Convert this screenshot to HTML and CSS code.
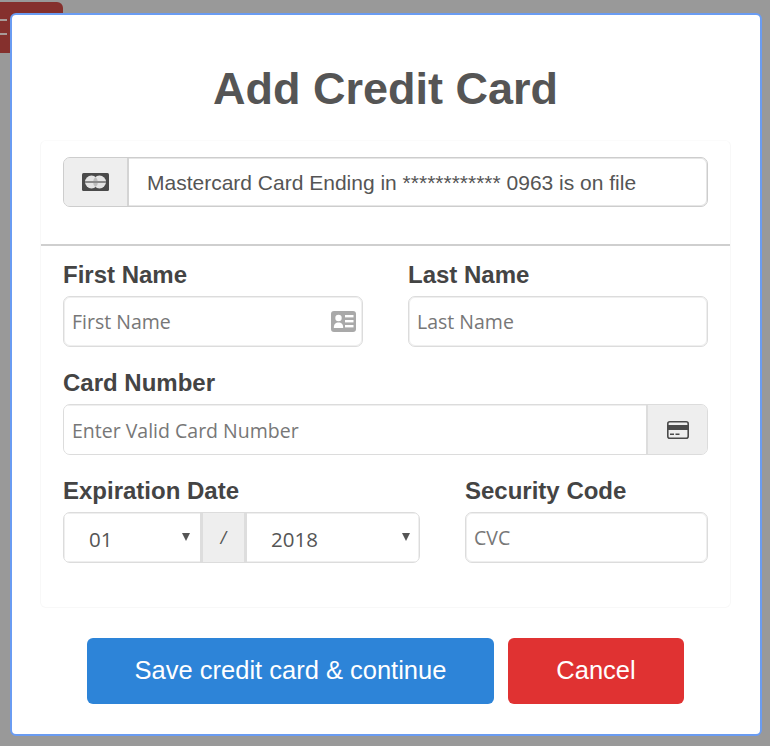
FILE: index.html
```html
<!DOCTYPE html>
<html lang="en">
<head>
<meta charset="utf-8">
<title>Add Credit Card</title>
<link rel="stylesheet" href="styles.css">
</head>
<body>
<div class="behind"><span class="behind-mark"></span></div>
<div class="modal">
  <h1 class="title">Add Credit Card</h1>
  <div class="panel">
    <div class="panel-top">
      <div class="group group-file">
        <span class="addon addon-file">
          <svg class="icon-mc" viewBox="0 0 27 18" width="27" height="18" aria-hidden="true">
            <rect x="0" y="0" width="27" height="18" rx="1.5" fill="#4a4a4a"/>
            <circle cx="9.5" cy="9" r="6.5" fill="#e4e4e4"/>
            <circle cx="17.5" cy="9" r="6.5" fill="#e4e4e4"/>
            <path d="M13.5 3.9a6.5 6.500 0 0 1 0 10.200a6.500 6.500 0 0 1 0-10.200z" fill="#bdbdbd"/>
            <rect x="3" y="8" width="21" height="2" fill="#8a8a8a"/>
          </svg>
        </span>
        <div class="file-text">Mastercard Card Ending in ************ 0963 is on file</div>
      </div>
    </div>
    <div class="panel-form">
      <div class="row">
        <div class="field field-half">
          <label class="label">First Name</label>
          <div class="input-wrap">
            <input class="input" placeholder="First Name">
            <svg class="icon-id" viewBox="0 0 25 21" width="25" height="21" aria-hidden="true">
              <rect x="0" y="0" width="25" height="21" rx="3" fill="#a9a9a9"/>
              <circle cx="7.500" cy="7" r="3.200" fill="#fff"/>
              <path d="M2.800 17c0-4 1.800-5.500 4.700-5.500s4.700 1.500 4.700 5.500z" fill="#fff"/>
              <rect x="14" y="4" width="8.500" height="2.400" fill="#fff"/>
              <rect x="14" y="9" width="8.500" height="2.400" fill="#fff"/>
              <rect x="14" y="14" width="8.500" height="2.400" fill="#fff"/>
            </svg>
          </div>
        </div>
        <div class="field field-half">
          <label class="label">Last Name</label>
          <input class="input" placeholder="Last Name">
        </div>
      </div>
      <div class="field">
        <label class="label">Card Number</label>
        <div class="group group-card">
          <input class="input input-joined" placeholder="Enter Valid Card Number">
          <span class="addon addon-card">
            <svg viewBox="0 0 22 18" width="22" height="18" aria-hidden="true">
              <rect x="0.800" y="0.800" width="20.400" height="16.400" rx="2" fill="none" stroke="#4a4a4a" stroke-width="1.600"/>
              <rect x="1" y="4" width="20" height="5" fill="#4a4a4a"/>
              <rect x="3" y="12.500" width="4" height="1.500" fill="#4a4a4a"/>
              <rect x="8.500" y="12.500" width="4" height="1.500" fill="#4a4a4a"/>
            </svg>
          </span>
        </div>
      </div>
      <div class="row row-last">
        <div class="field field-exp">
          <label class="label">Expiration Date</label>
          <div class="group group-exp">
            <div class="select-wrap select-month">
              <select class="select"><option>01</option></select>
            </div>
            <span class="slash">/</span>
            <div class="select-wrap select-year">
              <select class="select"><option>2018</option></select>
            </div>
          </div>
        </div>
        <div class="field field-cvc">
          <label class="label">Security Code</label>
          <input class="input" placeholder="CVC">
        </div>
      </div>
    </div>
  </div>
  <div class="actions">
    <button class="btn btn-save" type="button">Save credit card &amp; continue</button>
    <button class="btn btn-cancel" type="button">Cancel</button>
  </div>
</div>
</body>
</html>
```

FILE: styles.css
```css
* { box-sizing: border-box; }
html, body { height: 100%; }
body {
  margin: 0;
  background: #999;
  font-family: "Liberation Sans", Arial, sans-serif;
  overflow: hidden;
}
.behind {
  position: absolute;
  left: -20px;
  top: 2px;
  width: 83px;
  height: 51px;
  background: #85302d;
  border-radius: 6px;
}
.behind-mark {
  position: absolute;
  left: 20px;
  top: 17px;
  width: 7px;
  height: 16px;
  border-top: 2px solid #a89a98;
  border-bottom: 2px solid #a89a98;
}
.modal {
  position: absolute;
  left: 10px;
  top: 13px;
  width: 752px;
  height: 723px;
  background: #fff;
  border: 2px solid #6a9cf2;
  border-radius: 6px;
  padding: 0 29px 0 28px;
}
.title {
  margin: 0;
  padding-top: 48px;
  height: 125px;
  text-align: center;
  font-size: 45px;
  line-height: 52px;
  font-weight: 700;
  color: #555;
}
.panel {
  width: 691px;
  height: 468px;
  border: 1px solid #f8f8f8;
  border-top-color: #fbfbfb;
  border-radius: 6px;
}
.panel-top {
  height: 105px;
  padding: 16px 22px 0;
  border-bottom: 2px solid #cfcfcf;
}
.panel-form {
  padding: 13px 22px 0;
}
.row {
  display: flex;
  justify-content: space-between;
}
.field { display: block; margin-bottom: 20px; }
.field-half { width: 300px; }
.field-exp { width: 357px; margin-bottom: 0; }
.field-cvc { width: 243px; margin-bottom: 0; }
.label {
  display: block;
  height: 37px;
  font-size: 24px;
  line-height: 32px;
  font-weight: 700;
  color: #444;
}
.group {
  display: flex;
  height: 51px;
  border: 1px solid #dcdcdc;
  border-radius: 7px;
  background: #fff;
  overflow: hidden;
  box-shadow: inset 0 0 0 1px #efefef;
}
.group-file {
  height: 50px;
  border-color: #cdcdcd;
  box-shadow: inset 0 0 0 1px #e6e6e6;
}
.addon {
  flex: none;
  display: flex;
  align-items: center;
  justify-content: center;
  background: #eee;
}
.addon-file {
  width: 65px;
  border-right: 2px solid #d4d4d4;
}
.file-text {
  padding-left: 18px;
  font-size: 21px;
  line-height: 50px;
  color: #555;
  white-space: nowrap;
}
.input-wrap { position: relative; }
.icon-id {
  position: absolute;
  right: 7px;
  top: 15px;
}
.input {
  display: block;
  width: 100%;
  height: 51px;
  padding: 0 8px;
  border: 1px solid #dcdcdc;
  box-shadow: inset 0 0 0 1px #efefef;
  border-radius: 7px;
  background: #fff;
  font-family: "Open Sans", sans-serif;
  font-size: 19.500px;
  color: #555;
  outline: none;
}
.input::placeholder { color: #777; opacity: 1; }
.input-joined {
  flex: 1;
  height: 49px;
  min-width: 0;
  border: 0;
  box-shadow: none;
  margin: 1px 0;
  padding-left: 8px;
  border-radius: 0;
}
.addon-card {
  width: 61px;
  border-left: 2px solid #ddd;
}
.select-wrap { position: relative; height: 100%; }
.select-wrap::after {
  content: "";
  position: absolute;
  top: 19px;
  border-left: 4.500px solid transparent;
  border-right: 4.500px solid transparent;
  border-top: 8.500px solid #555;
}
.select-month::after { right: 10px; }
.select-year::after { right: 8px; }
.select-month { width: 135px; margin: 1px 0 1px 1px; }
.select-year { width: 171px; margin: 1px 1px 1px 0; }
.select {
  appearance: none;
  -webkit-appearance: none;
  display: block;
  width: 100%;
  height: 47px;
  padding: 3px 0 0 24px;
  border: 0;
  background: #fff;
  font-family: "Open Sans", sans-serif;
  font-size: 20.500px;
  color: #555;
  outline: none;
}
.slash {
  flex: none;
  width: 47px;
  display: flex;
  align-items: center;
  justify-content: center;
  background: #eee;
  border-left: 3px solid #ddd;
  border-right: 3px solid #ddd;
  font-family: "Liberation Sans", Arial, sans-serif;
  font-style: italic;
  font-size: 19px;
  color: #555;
}
.actions {
  display: flex;
  justify-content: center;
  gap: 14px;
  margin-top: 30px;
}
.btn {
  height: 66px;
  border: 0;
  border-radius: 6px;
  font-family: "Liberation Sans", Arial, sans-serif;
  font-size: 25.500px;
  color: #fff;
  padding: 0 0 2px;
}
.btn-save { width: 407px; background: #2d84d8; }
.btn-cancel { width: 176px; background: #e03232; }
```
